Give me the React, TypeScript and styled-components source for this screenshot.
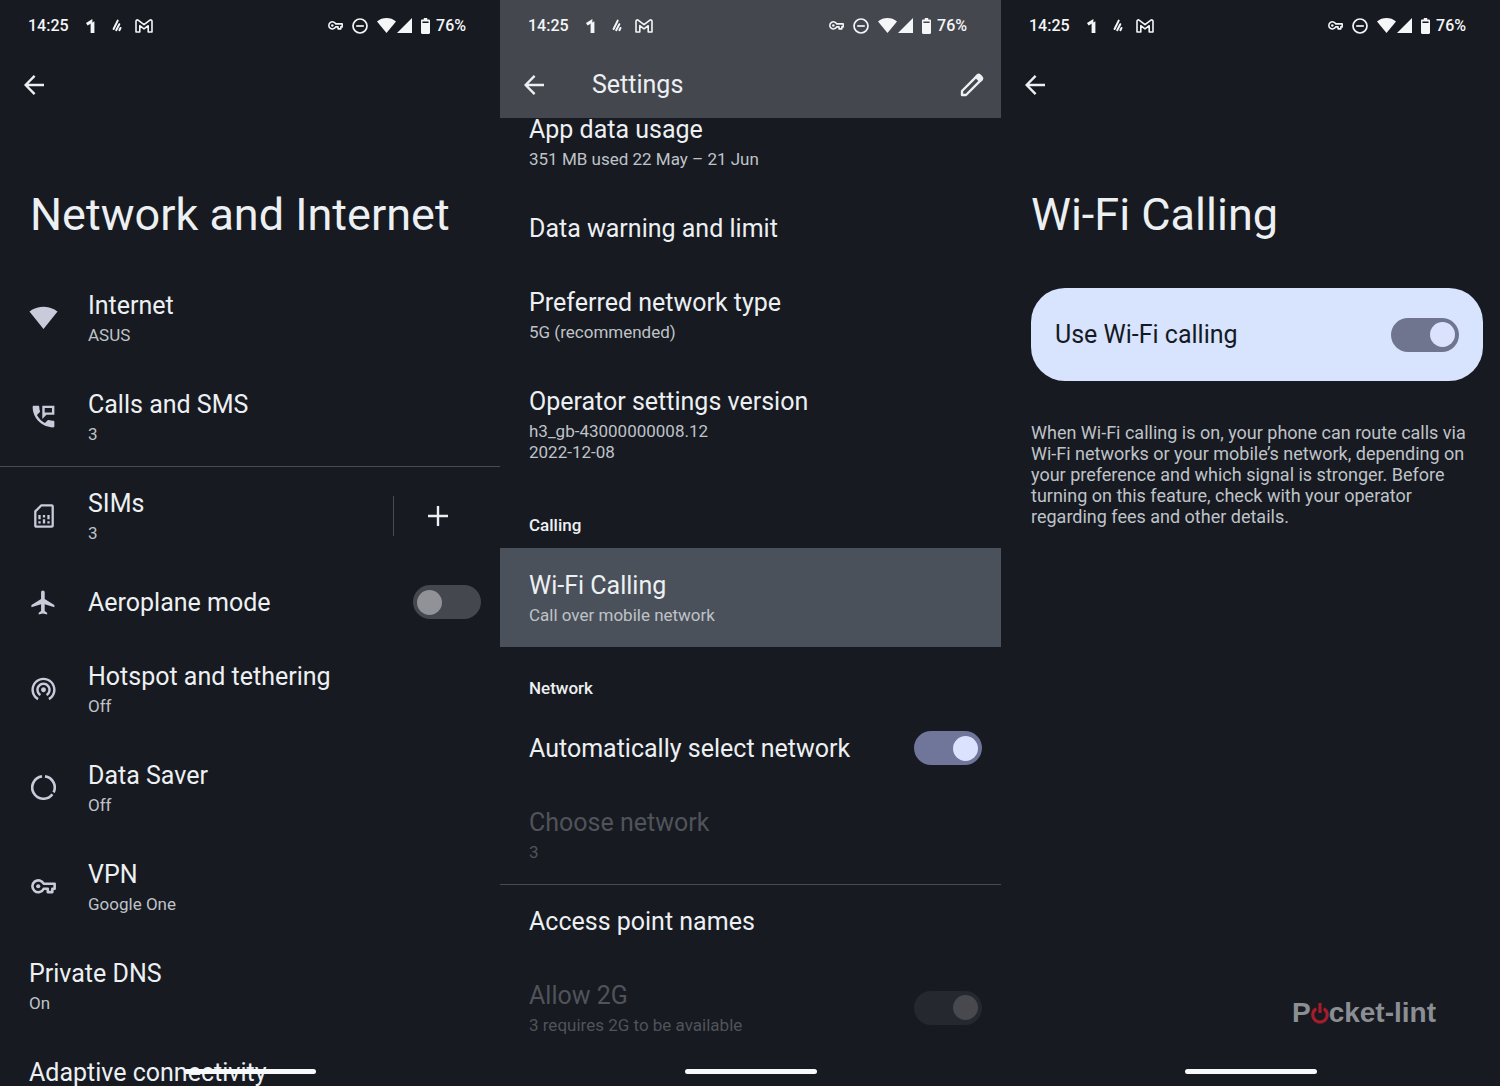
import React, { ReactNode, useId } from "react";
import styled, { createGlobalStyle, css } from "styled-components";
import { MdFlight, MdSignalWifi4Bar, MdWifiTethering } from "react-icons/md";

const color = {
  bg: "#171a21",
  bar: "#45474e",
  pressed: "#4b515b",
  line: "#484b52",
  text: "#edf0f2",
  sub: "#bfc3c8",
  icon: "#c8cbd9",
  disabled: "#505359",
  card: "#d8e3fd",
  cardText: "#141a24",
  track: "#70759a",
  trackCard: "#70758f",
  thumb: "#dae2fd",
};

const GlobalStyle = createGlobalStyle`
  *, *::before, *::after { box-sizing: border-box; }
  body {
    margin: 0;
    background: ${color.bg};
    color: ${color.text};
    font-family: Roboto, "Liberation Sans", sans-serif;
  }
  h1, h2, h3, p, ul { margin: 0; padding: 0; font-weight: 400; }
  button { font: inherit; color: inherit; background: none; border: 0; padding: 0; cursor: pointer; }
  svg { display: block; flex: none; }
`;

const Screens = styled.main`
  display: grid;
  grid-template-columns: 500fr 501fr 499fr;
  height: 100vh;
`;

const Phone = styled.section`
  position: relative;
  display: flex;
  flex-direction: column;
  min-width: 0;
  overflow: hidden;
`;

const TopArea = styled.header<{ $raised?: boolean }>`
  flex: none;
  background: ${(p) => (p.$raised ? color.bar : "transparent")};
  z-index: 1;
`;

const StatusRow = styled.div`
  display: flex;
  align-items: center;
  justify-content: space-between;
  height: 51px;
  padding: 0 34px 0 28px;
  font-size: 16px;
  font-weight: 500;
  color: #f4f6f8;
`;

const Cluster = styled.div<{ $gap: number }>`
  display: flex;
  align-items: center;
  gap: ${(p) => p.$gap}px;
`;

const AppBar = styled.div`
  display: flex;
  align-items: center;
  height: 67px;
  padding: 0 17px 0 24px;
`;

const AppBarTitle = styled.h2`
  flex: 1;
  margin-left: 48px;
  font-size: 25px;
  line-height: 32px;
`;

const IconButton = styled.button`
  display: flex;
  flex: none;
`;

const PageTitle = styled.h1`
  flex: none;
  padding: 69px 30px 0;
  margin-bottom: 25px;
  font-size: 45px;
  line-height: 56px;
`;

const List = styled.ul<{ $scrolled?: boolean }>`
  list-style: none;
  flex: none;
  margin-top: ${(p) => (p.$scrolled ? "-26px" : "0")};
`;

const RowBox = styled.li<{ $pressed?: boolean; $divided?: boolean; $disabled?: boolean }>`
  display: flex;
  align-items: center;
  padding: 0 19px 0 29px;
  color: ${(p) => (p.$disabled ? color.disabled : color.text)};
  background: ${(p) => (p.$pressed ? color.pressed : "transparent")};
  ${(p) =>
    p.$divided &&
    css`
      box-shadow: inset 0 1px ${color.line};
    `}
`;

const RowIcon = styled.span`
  display: flex;
  justify-content: center;
  flex: none;
  width: 29px;
  margin-right: 30px;
  color: ${color.icon};
`;

const RowText = styled.div`
  flex: 1;
  min-width: 0;
  padding: 22px 0 20px;
`;

const RowTitle = styled.label`
  display: block;
  font-size: 25px;
  line-height: 32px;
`;

const RowSub = styled.p<{ $disabled?: boolean }>`
  padding: 3px 0 1px;
  font-size: 17px;
  line-height: 21px;
  white-space: pre-line;
  color: ${(p) => (p.$disabled ? color.disabled : color.sub)};
`;

const SectionTitle = styled.h3`
  padding: 31px 29px 12px;
  font-size: 17px;
  line-height: 21px;
  font-weight: 500;
`;

const AddSide = styled.div`
  display: flex;
  align-items: center;
  height: 40px;
  padding: 0 33px 0 34px;
  border-left: 1px solid ${color.line};
`;

const tones = {
  on: { track: color.track, thumb: color.thumb },
  card: { track: color.trackCard, thumb: color.thumb },
  off: { track: "#45474e", thumb: "#909298" },
  disabled: { track: "#25282f", thumb: "#47494f" },
};

const Switch = styled.input.attrs({ type: "checkbox", role: "switch" })<{
  $tone: keyof typeof tones;
}>`
  appearance: none;
  flex: none;
  display: flex;
  align-items: center;
  justify-content: flex-start;
  width: 68px;
  height: 34px;
  margin: 0;
  padding: 0 4px;
  border-radius: 17px;
  background: ${(p) => tones[p.$tone].track};

  &:checked {
    justify-content: flex-end;
  }

  &::before {
    content: "";
    width: 25px;
    height: 25px;
    border-radius: 50%;
    background: ${(p) => tones[p.$tone].thumb};
  }
`;

const Card = styled.div`
  display: flex;
  align-items: center;
  justify-content: space-between;
  flex: none;
  margin: 20px 17px 0 30px;
  padding: 29px 24px;
  min-height: 93px;
  border-radius: 34px;
  background: ${color.card};
  color: ${color.cardText};
`;

const Note = styled.p`
  padding: 41px 30px 0;
  font-size: 18px;
  line-height: 21px;
  color: ${color.sub};
`;

const HomeBar = styled.div`
  position: absolute;
  left: 50%;
  bottom: 12px;
  width: 132px;
  height: 5px;
  margin-left: -66px;
  border-radius: 3px;
  background: #f8f9fa;
`;

const Brand = styled.div`
  display: flex;
  align-items: center;
  justify-content: flex-end;
  margin-top: auto;
  padding: 0 64px 55px 0;
  color: #8b8e93;
  font-family: "Liberation Sans", Arial, sans-serif;
  font-size: 28px;
  line-height: 36px;
  font-weight: 700;
`;

const OneIcon = () => (
  <svg width="9" height="14" viewBox="0 0 9 14" fill="currentColor" aria-hidden="true">
    <path d="M0 4 6.400 0v3.800L1.600 6.600z" />
    <path d="M4.600 4.600 8.400 2.300V14H4.600z" />
  </svg>
);

const StripesIcon = () => (
  <svg width="10" height="13" viewBox="0 0 10 13" stroke="currentColor" strokeWidth="2" strokeLinecap="round" aria-hidden="true">
    <path d="M1.600 10 5.700 1.600M4.200 11.200 7.300 5.200M7.400 11.200 8.500 9" />
  </svg>
);

const MailIcon = () => (
  <svg width="18" height="14" viewBox="0 0 18 14" fill="none" stroke="currentColor" strokeWidth="1.600" strokeLinejoin="round" aria-hidden="true">
    <path d="M1 2.200C1 .8 2.400.6 3.400 1.300L9 5.600l5.600-4.300c1-.7 2.400-.5 2.400.9V13h-3.800V6.700L9 9.800 4.800 6.700V13H1z" />
  </svg>
);

const KeyIcon = ({ size }: { size: number }) => (
  <svg width={size} height={(size * 14) / 24} viewBox="0 0 24 14" fill="none" stroke="currentColor" strokeWidth="2.500" aria-hidden="true">
    <path d="M12.200 4.600h10.500v4.800h-2.200v3.200h-4.400V9.400h-3.900A5.700 5.700 0 1 1 12.200 4.600z" strokeLinejoin="round" />
    <circle cx="6.900" cy="7" r="2" fill="currentColor" stroke="none" />
  </svg>
);

const DndIcon = () => (
  <svg width="16" height="16" viewBox="0 0 16 16" fill="none" stroke="currentColor" strokeWidth="1.700" aria-hidden="true">
    <circle cx="8" cy="8" r="7" />
    <path d="M4.200 8h7.600" />
  </svg>
);

const WifiIcon = () => (
  <svg width="19" height="15" viewBox="0 0 19 15" fill="currentColor" aria-hidden="true">
    <path d="M0 3.400C5.400-1.100 13.600-1.100 19 3.400L9.500 15z" />
  </svg>
);

const SignalIcon = () => (
  <svg width="15" height="15" viewBox="0 0 15 15" fill="currentColor" aria-hidden="true">
    <path d="M0 15 15 0v15z" />
  </svg>
);

const BatteryIcon = () => (
  <svg width="9" height="16" viewBox="0 0 9 16" fill="currentColor" aria-hidden="true">
    <path fillRule="evenodd" d="M2.800 0h3.400v1.500h1.600c.7 0 1.200.5 1.200 1.200v12.100c0 .7-.5 1.200-1.200 1.200H1.200C.5 16 0 15.500 0 14.800V2.700C0 2 .5 1.500 1.200 1.500h1.600zM1.400 3.400v1.700h6.200V3.400z" />
  </svg>
);

const BackIcon = () => (
  <svg width="20" height="20" viewBox="0 0 20 20" fill="none" stroke="currentColor" strokeWidth="2.400" aria-hidden="true">
    <path d="M20 10H2M10.600.9 1.600 10l9 9.100" />
  </svg>
);

const PencilIcon = () => (
  <svg width="24" height="24" viewBox="0 0 24 24" fill="none" stroke="currentColor" strokeWidth="2.400" strokeLinejoin="round" aria-hidden="true">
    <path d="M2 22v-4L17.600 2.400a1.600 1.600 0 0 1 2.200 0l1.800 1.800a1.600 1.600 0 0 1 0 2.200L6 22z" />
    <path d="m16 4 4 4 1.700-1.700-4-4z" fill="currentColor" />
  </svg>
);

const PlusIcon = () => (
  <svg width="20" height="20" viewBox="0 0 20 20" stroke="currentColor" strokeWidth="2.400" aria-hidden="true">
    <path d="M10 0v20M0 10h20" />
  </svg>
);

const PhoneMessageIcon = () => (
  <svg width="29" height="29" viewBox="0 0 24 24" fill="currentColor" aria-hidden="true">
    <path d="M20 15.500c-1.250 0-2.450-.2-3.570-.57a1.020 1.020 0 0 0-1.020.24l-2.200 2.200a15.045 15.045 0 0 1-6.590-6.590l2.200-2.210a.96.96 0 0 0 .25-1A11.360 11.360 0 0 1 8.500 4c0-.55-.45-1-1-1H4c-.55 0-1 .45-1 1 0 9.390 7.610 17 17 17 .55 0 1-.45 1-1v-3.500c0-.55-.45-1-1-1z" />
    <path fillRule="evenodd" d="M11 3v11l3.400-3.400H21V3zm2 2h6v3.600h-6z" />
  </svg>
);

const SimIcon = () => (
  <svg width="20" height="24" viewBox="0 0 20 24" fill="none" stroke="currentColor" aria-hidden="true">
    <path d="M7.400 1.300h10.300c.6 0 1 .4 1 1v19.400c0 .6-.4 1-1 1H2.300c-.6 0-1-.4-1-1V7.400z" strokeWidth="2.300" strokeLinejoin="round" />
    <path d="M5.500 11v4.200M5.500 17.200v2.400M10 11v2.400M10 15.200v4.400M14.500 11v4.200M14.500 17.200v2.400" strokeWidth="2.300" />
  </svg>
);

const DataSaverIcon = () => (
  <svg width="25" height="25" viewBox="0 0 25 25" fill="none" stroke="currentColor" strokeWidth="2.600" aria-hidden="true">
    <path d="M14 1.400A11.200 11.200 0 0 1 22.600 17.400" />
    <path d="M21.400 19.200A11.200 11.200 0 1 1 11 1.400" />
  </svg>
);

const PowerIcon = () => (
  <svg width="18" height="23" viewBox="0 0 18 23" fill="none" stroke="#a51d2b" strokeWidth="3.200" aria-hidden="true">
    <path d="M5.300 6.600a7.200 7.200 0 1 0 7.400 0M9 1v10" />
  </svg>
);

const StatusBar = () => (
  <StatusRow>
    <Cluster $gap={13}>
      <Cluster $gap={17}>
        <span>14:25</span>
        <OneIcon />
        <StripesIcon />
      </Cluster>
      <MailIcon />
    </Cluster>
    <Cluster $gap={9}>
      <KeyIcon size={15} />
      <DndIcon />
      <Cluster $gap={1}>
        <WifiIcon />
        <SignalIcon />
      </Cluster>
      <Cluster $gap={6}>
        <BatteryIcon />
        <span>76%</span>
      </Cluster>
    </Cluster>
  </StatusRow>
);

const Back = () => (
  <IconButton type="button" aria-label="Back">
    <BackIcon />
  </IconButton>
);

type RowProps = {
  title: string;
  sub?: string;
  icon?: ReactNode;
  side?: ReactNode;
  toggle?: keyof typeof tones;
  pressed?: boolean;
  divided?: boolean;
  disabled?: boolean;
};

const Row = ({ title, sub, icon, side, toggle, pressed, divided, disabled }: RowProps) => {
  const id = useId();
  return (
    <RowBox $pressed={pressed} $divided={divided} $disabled={disabled}>
      {icon && <RowIcon>{icon}</RowIcon>}
      <RowText>
        <RowTitle as={toggle ? "label" : "h3"} htmlFor={toggle ? id : undefined}>
          {title}
        </RowTitle>
        {sub && <RowSub $disabled={disabled}>{sub}</RowSub>}
      </RowText>
      {side}
      {toggle && (
        <Switch id={id} $tone={toggle} defaultChecked={toggle !== "off"} disabled={disabled} />
      )}
    </RowBox>
  );
};

const NetworkScreen = () => (
  <Phone>
    <TopArea>
      <StatusBar />
      <AppBar>
        <Back />
      </AppBar>
    </TopArea>
    <PageTitle>Network and Internet</PageTitle>
    <List>
      <Row title="Internet" sub="ASUS" icon={<MdSignalWifi4Bar size={29} />} />
      <Row title="Calls and SMS" sub="3" icon={<PhoneMessageIcon />} />
      <Row
        title="SIMs"
        sub="3"
        divided
        icon={<SimIcon />}
        side={
          <AddSide>
            <IconButton type="button" aria-label="Add SIM">
              <PlusIcon />
            </IconButton>
          </AddSide>
        }
      />
      <Row title="Aeroplane mode" icon={<MdFlight size={29} />} toggle="off" />
      <Row title="Hotspot and tethering" sub="Off" icon={<MdWifiTethering size={29} />} />
      <Row title="Data Saver" sub="Off" icon={<DataSaverIcon />} />
      <Row title="VPN" sub="Google One" icon={<KeyIcon size={25} />} />
      <Row title="Private DNS" sub="On" />
      <Row title="Adaptive connectivity" />
    </List>
    <HomeBar />
  </Phone>
);

const SettingsScreen = () => (
  <Phone>
    <TopArea $raised>
      <StatusBar />
      <AppBar>
        <Back />
        <AppBarTitle>Settings</AppBarTitle>
        <IconButton type="button" aria-label="Edit">
          <PencilIcon />
        </IconButton>
      </AppBar>
    </TopArea>
    <List $scrolled>
      <Row title="App data usage" sub="351 MB used 22 May – 21 Jun" />
      <Row title="Data warning and limit" />
      <Row title="Preferred network type" sub="5G (recommended)" />
      <Row title="Operator settings version" sub={"h3_gb-43000000008.12\n2022-12-08"} />
      <li>
        <SectionTitle>Calling</SectionTitle>
      </li>
      <Row title="Wi-Fi Calling" sub="Call over mobile network" pressed />
      <li>
        <SectionTitle>Network</SectionTitle>
      </li>
      <Row title="Automatically select network" toggle="on" />
      <Row title="Choose network" sub="3" disabled />
      <Row title="Access point names" divided />
      <Row title="Allow 2G" sub="3 requires 2G to be available" toggle="disabled" disabled />
    </List>
    <HomeBar />
  </Phone>
);

const CallingScreen = () => (
  <Phone>
    <TopArea>
      <StatusBar />
      <AppBar>
        <Back />
      </AppBar>
    </TopArea>
    <PageTitle>Wi-Fi Calling</PageTitle>
    <Card>
      <RowTitle htmlFor="wifi-calling">Use Wi-Fi calling</RowTitle>
      <Switch id="wifi-calling" $tone="card" defaultChecked />
    </Card>
    <Note>
      When Wi-Fi calling is on, your phone can route calls via Wi-Fi networks or your mobile’s
      network, depending on your preference and which signal is stronger. Before turning on this
      feature, check with your operator regarding fees and other details.
    </Note>
    <Brand>
      <span>P</span>
      <PowerIcon />
      <span>cket-lint</span>
    </Brand>
    <HomeBar />
  </Phone>
);

export default function App() {
  return (
    <>
      <GlobalStyle />
      <Screens>
        <NetworkScreen />
        <SettingsScreen />
        <CallingScreen />
      </Screens>
    </>
  );
}
